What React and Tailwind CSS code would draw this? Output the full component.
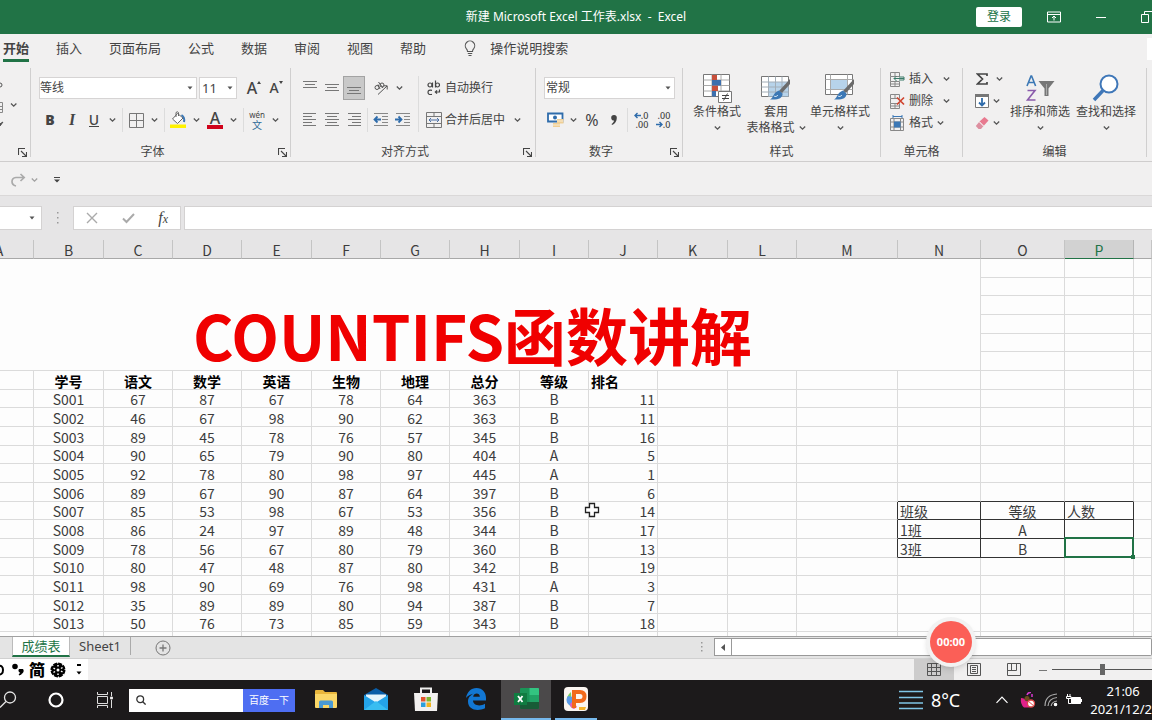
import React, { useState } from 'react';
import clsx from 'clsx';

const menus = ["插入", "页面布局", "公式", "数据", "审阅", "视图", "帮助"];

const columns = [
    { name: "A", width: "w-[69px]" },
    { name: "B", width: "w-[70px]" },
    { name: "C", width: "w-[69px]" },
    { name: "D", width: "w-[69px]" },
    { name: "E", width: "w-[70px]" },
    { name: "F", width: "w-[69px]" },
    { name: "G", width: "w-[69px]" },
    { name: "H", width: "w-[70px]" },
    { name: "I", width: "w-[69px]" },
    { name: "J", width: "w-[69px]" },
    { name: "K", width: "w-[70px]" },
    { name: "L", width: "w-[69px]" },
    { name: "M", width: "w-[101px]" },
    { name: "N", width: "w-[83px]" },
    { name: "O", width: "w-[84px]" },
    { name: "P", width: "w-[69px]" },
    { name: "", width: "" },
];

const titleRows = 6;

const rows = [
    ["学号", "语文", "数学", "英语", "生物", "地理", "总分", "等级", "排名"],
    ["S001", 67, 87, 67, 78, 64, 363, "B", 11],
    ["S002", 46, 67, 98, 90, 62, 363, "B", 11],
    ["S003", 89, 45, 78, 76, 57, 345, "B", 16],
    ["S004", 90, 65, 79, 90, 80, 404, "A", 5],
    ["S005", 92, 78, 80, 98, 97, 445, "A", 1],
    ["S006", 89, 67, 90, 87, 64, 397, "B", 6],
    ["S007", 85, 53, 98, 67, 53, 356, "B", 14],
    ["S008", 86, 24, 97, 89, 48, 344, "B", 17],
    ["S009", 78, 56, 67, 80, 79, 360, "B", 13],
    ["S010", 80, 47, 48, 87, 80, 342, "B", 19],
    ["S011", 98, 90, 69, 76, 98, 431, "A", 3],
    ["S012", 35, 89, 89, 80, 94, 387, "B", 7],
    ["S013", 50, 76, 73, 85, 59, 343, "B", 18],
    [],
];

// small summary table in N:P, keyed by row index
const summary = {
    7: ["班级", "等级", "人数"],
    8: ["1班", "A", ""],
    9: ["3班", "B", ""],
};

const rowHeight = (i) => (i % 3 === 1 ? "h-[18px]" : "h-[19px]");

/* ---------- ribbon helpers ---------- */

const Chevron = ({ className = "" }) => (
    <svg className={clsx("h-[6px] w-[7px] shrink-0", className)} viewBox="0 0 7 6" fill="none" stroke="#555" strokeWidth="1.3">
        <path d="M.8 1.5 3.5 4.2 6.2 1.5" />
    </svg>
);

const Triangle = ({ className = "" }) => (
    <svg className={clsx("h-[4px] w-[6px]", className)} viewBox="0 0 6 4" fill="#555">
        <path d="M.5 .5h5L3 3.5z" />
    </svg>
);

const Drop = ({ label }) => (
    <button type="button" aria-label={label} className="flex h-6 w-[15px] shrink-0 items-center justify-center">
        <Chevron />
    </button>
);

const IconButton = ({ label, active, children }) => (
    <button
        type="button"
        aria-label={label}
        className={clsx(
            "flex h-6 w-[22px] shrink-0 items-center justify-center",
            active && "border border-[#a3a3a3] bg-[#c9c9c9]"
        )}
    >
        {children}
    </button>
);

const Separator = () => <div className="mx-[2px] h-6 w-px shrink-0 bg-[#dcdcdc]" />;

const Launcher = () => (
    <button type="button" aria-label="对话框启动器" className="flex w-4 shrink-0 items-center justify-center">
        <svg className="h-[9px] w-[9px]" viewBox="0 0 9 9" fill="none" stroke="#444">
            <path d="M.5 7V.5H7M3 3l5 5M8.500 4v4.500H4" strokeWidth="1.100" />
        </svg>
    </button>
);

const Group = ({ title, width, pad, launcher, children }) => (
    <section aria-label={title} className={clsx("flex shrink-0 pt-[5px]", width)}>
        <div className="flex h-full min-w-0 flex-1 flex-col">
            <div className={clsx("flex", pad)}>{children}</div>
            <div className="mt-auto flex h-[18px] items-center text-xs">
                <span className="flex-1 text-center">{title}</span>
                {launcher && <Launcher />}
            </div>
        </div>
        <div className="mb-1 w-px bg-[#d0cfcf]" />
    </section>
);

const BigButton = ({ width, icon, text, text2 }) => (
    <button type="button" className={clsx("flex shrink-0 flex-col items-center text-xs leading-4 whitespace-nowrap", width)}>
        <span className="flex h-8 items-center">{icon}</span>
        <span>{text}</span>
        <span className="flex h-4 items-center gap-1">
            {text2}
            <Chevron />
        </span>
    </button>
);

const Lines = ({ d }) => (
    <svg className="h-4 w-[14px]" viewBox="0 0 14 16" stroke="#777" fill="none">
        <path d={d} />
    </svg>
);

const Indent = ({ arrow }) => (
    <svg className="h-4 w-4" viewBox="0 0 16 16" stroke="#888" fill="none">
        <path d="M1 1.500h14M9 4.500h6M9 7.500h6M9 10.500h6M1 13.500h14" />
        <path d={arrow} stroke="#2f6cab" strokeWidth="1.800" />
    </svg>
);

const Decimals = ({ top, bottom, arrowFirst }) => (
    <span className="flex flex-col text-[9px] leading-[9px] font-medium">
        <span className="flex items-center justify-end">
            {arrowFirst && (
                <svg className="h-[7px] w-[7px]" viewBox="0 0 7 7" fill="none" stroke="#2f6cab" strokeWidth="1.400">
                    <path d="M7 3.500H1M3.500 1 1 3.500 3.500 6" />
                </svg>
            )}
            {top}
        </span>
        <span className="flex items-center justify-end">
            {!arrowFirst && (
                <svg className="h-[7px] w-[7px]" viewBox="0 0 7 7" fill="none" stroke="#2f6cab" strokeWidth="1.400">
                    <path d="M0 3.500h6M3.500 1 6 3.500 3.500 6" />
                </svg>
            )}
            {bottom}
        </span>
    </span>
);

const Brush = () => (
    <>
        <path d="M29 6v5l-8 9-3-2z" fill="#6b6b6b" />
        <path d="M18 17.500l3.500 3c0 5-4 6.500-12.500 6 3.500-1.500 3-7 9-9z" fill="#3c78b5" />
        <path d="M13 23c1 1 3 .5 4-1" stroke="#cfe2f3" fill="none" />
    </>
);

const ConditionalIcon = () => (
    <svg className="h-[30px] w-[30px]" viewBox="0 0 30 30" fill="none">
        <path d="M1.500 1.500h26v22h-26z" fill="#fff" stroke="#777" />
        <path d="M10 1.500v22M19 1.500v22M1.500 7h26M1.500 12.500h26M1.500 18h26" stroke="#aaa" />
        <path d="M10 2h5v5h-5zM10 12.500h6V18h-6z" fill="#c8503c" />
        <path d="M10 7h9v5.500h-9zM10 18h4v5.500h-4z" fill="#3c6fae" />
        <path d="M16.500 18.500h13v11h-13z" fill="#fff" stroke="#777" />
        <path d="M20 22.500h7M20 25.500h7M25.500 20.500l-4 7" stroke="#444" />
    </svg>
);

const TableStyleIcon = () => (
    <svg className="h-[30px] w-[30px]" viewBox="0 0 30 30" fill="none">
        <path d="M.5 3.500h27v20H.5z" fill="#fff" stroke="#777" />
        <path d="M7.500 9h20v14.500h-20z" fill="#b7d3ea" />
        <path d="M7.500 3.500v20M14.500 3.500v20M21 3.500v20M.5 9h27M.5 14h27M.5 19h27" stroke="#a3aeb8" />
        <Brush />
    </svg>
);

const CellStyleIcon = () => (
    <svg className="h-[30px] w-[30px]" viewBox="0 0 30 30" fill="none">
        <path d="M.5 1.500h27v20H.5z" fill="#fff" stroke="#777" />
        <path d="M5.500 6.500h17v10h-17z" fill="#b7d3ea" stroke="#8b9aa6" />
        <path d="M5.500 1.500v20M22.500 1.500v20M.5 6.500h27M.5 16.500h27" stroke="#aaa" />
        <Brush />
    </svg>
);

const CellsIcon = ({ type }) => (
    <svg className="h-4 w-4" viewBox="0 0 16 16" fill="none">
        {type === "format" ? (
            <>
                <path d="M1.500 3.500h13v12h-13zM5 3.500v12M11.500 3.500v12M1.500 7h13M1.500 12h13" stroke="#888" />
                <path d="M5 6.500h6.500v6H5z" fill="#3c78b5" />
                <path d="M4 1.500h9M4 0v3M13 0v3" stroke="#3c78b5" />
            </>
        ) : (
            <>
                <path d="M1.500 1.500h9v4h-9zM6 1.500v4M1.500 10.500h9v5h-9zM6 10.500v5M1.500 13h9M1.500 5.500v5" stroke="#888" />
                {type === "insert" ? (
                    <path d="M15 7.500H5M7.500 5 5 7.500 7.500 10M10 6h5v3h-5" stroke="#3a7a68" />
                ) : (
                    <path d="M8 4.500l7 7M15 4.500l-7 7" stroke="#d0452f" strokeWidth="1.700" />
                )}
            </>
        )}
    </svg>
);

const CellsRow = ({ type, text, gap }) => (
    <button type="button" className="flex h-[22px] items-center text-xs">
        <CellsIcon type={type} />
        <span className="ml-1">{text}</span>
        <Chevron className={gap} />
    </button>
);

const Ribbon = () => {
    const [font, setFont] = useState("等线");
    const [size, setSize] = useState("11");
    const [format, setFormat] = useState("常规");

    return (
        <div className="flex h-[99px] shrink-0 overflow-hidden border-b border-[#cfcdcd] text-[#444]">
            <Group title="" width="w-[31px]" pad="flex-col pt-2" launcher>
                <svg className="h-[56px] w-[18px]" viewBox="0 0 18 56" fill="none" stroke="#555">
                    <circle cx="0" cy="9" r="2" />
                    <path d="M-2 26.500h4.500v10H-2M0 30.500h2M0 33.500h2" stroke="#888" />
                    <path d="M11 27.500l2.700 2.700 2.700-2.700" strokeWidth="1.300" />
                    <path d="M3 46 0 50l-2-1z" fill="#444" />
                </svg>
            </Group>

            <Group title="字体" width="w-[260px]" pad="flex-col gap-2 pt-2 pl-2" launcher>
                <div className="flex h-6 items-center">
                    <div className="relative mr-[2px] flex items-center">
                        <select
                            aria-label="字体"
                            value={font}
                            onChange={(e) => setFont(e.target.value)}
                            className="h-[22px] w-[158px] appearance-none border border-[#d6d4d4] bg-white text-xs leading-5"
                        >
                            <option>等线</option>
                            <option>宋体</option>
                        </select>
                        <Triangle className="pointer-events-none absolute right-1" />
                    </div>
                    <div className="relative mr-[6px] flex items-center">
                        <select
                            aria-label="字号"
                            value={size}
                            onChange={(e) => setSize(e.target.value)}
                            className="h-[22px] w-[38px] appearance-none border border-[#d6d4d4] bg-white pl-[2px] text-[13px] leading-5"
                        >
                            <option>11</option>
                            <option>12</option>
                        </select>
                        <Triangle className="pointer-events-none absolute right-1" />
                    </div>
                    <IconButton label="增大字号">
                        <span className="text-base font-medium">A</span>
                        <svg className="mb-3 h-[3px] w-1" viewBox="0 0 4 3" fill="#444"><path d="M0 3h4L2 0z" /></svg>
                    </IconButton>
                    <IconButton label="减小字号">
                        <span className="text-sm font-medium">A</span>
                        <svg className="mb-3 h-[3px] w-1" viewBox="0 0 4 3" fill="#444"><path d="M0 0h4L2 3z" /></svg>
                    </IconButton>
                </div>
                <div className="flex h-6 items-center">
                    <IconButton label="加粗"><span className="text-sm font-black">B</span></IconButton>
                    <IconButton label="倾斜"><span className="font-['Liberation_Serif'] text-base font-bold italic">I</span></IconButton>
                    <IconButton label="下划线"><span className="border-b border-[#444] text-sm leading-[13px] font-medium">U</span></IconButton>
                    <Drop label="下划线选项" />
                    <Separator />
                    <IconButton label="边框">
                        <svg className="h-[15px] w-[15px]" viewBox="0 0 15 15" fill="none" stroke="#777">
                            <path d="M.5.5h14v14H.5zM7.500.5v14M.5 7.500h14" />
                        </svg>
                    </IconButton>
                    <Drop label="边框选项" />
                    <Separator />
                    <IconButton label="填充颜色">
                        <svg className="h-[18px] w-[18px]" viewBox="0 0 18 18" fill="none">
                            <path d="M8.500 2.500 3.500 8l5 4.500L14 7z" fill="#fff" stroke="#666" />
                            <path d="M7 6V1.500q1.500-1.500 2.500 0V5" stroke="#666" />
                            <path d="M12.500 4q3.500 2 2.500 7" stroke="#3c78b5" strokeWidth="2" />
                            <path d="M1 13.500h16v3.500H1z" fill="#fff200" />
                        </svg>
                    </IconButton>
                    <Drop label="填充颜色选项" />
                    <IconButton label="字体颜色">
                        <span className="border-b-4 border-[#d0021b] px-[3px] text-base leading-[13px] font-medium">A</span>
                    </IconButton>
                    <Drop label="字体颜色选项" />
                    <Separator />
                    <IconButton label="拼音指南">
                        <span className="flex flex-col items-center text-[8px] leading-[9px]">
                            <span>wén</span>
                            <span className="text-[10px] leading-3 text-[#2f6c9b]">文</span>
                        </span>
                    </IconButton>
                    <Drop label="拼音选项" />
                </div>
            </Group>

            <Group title="对齐方式" width="w-[245px]" pad="pt-2 pl-2" launcher>
                <div className="flex flex-col gap-2">
                    <div className="flex">
                        <IconButton label="顶端对齐"><Lines d="M0 1.500h14M2 4.500h10M0 7.500h14" /></IconButton>
                        <IconButton label="垂直居中"><Lines d="M0 4.500h14M2 7.500h10M0 10.500h14" /></IconButton>
                        <IconButton label="底端对齐" active><Lines d="M0 7.500h14M2 10.500h10M0 13.500h14" /></IconButton>
                        <div className="w-[5px]" />
                        <IconButton label="方向">
                            <svg className="h-4 w-4" viewBox="0 0 16 16" fill="none" stroke="#555">
                                <circle cx="4" cy="7.500" r="2" />
                                <path d="M5 4.500 7 9M5.500 2l4.500 6" />
                                <circle cx="9" cy="5" r="2" />
                                <path d="M5 14.500 14 6M10.500 5.800 14.200 5.800 14.200 9.500" />
                            </svg>
                        </IconButton>
                        <Drop label="方向选项" />
                    </div>
                    <div className="flex">
                        <IconButton label="左对齐"><Lines d="M0 1.500h13M0 4.500h9M0 7.500h13M0 10.500h9M0 13.500h13" /></IconButton>
                        <IconButton label="居中"><Lines d="M0 1.500h14M2 4.500h10M0 7.500h14M2 10.500h10M0 13.500h14" /></IconButton>
                        <IconButton label="右对齐"><Lines d="M1 1.500h13M5 4.500h9M1 7.500h13M5 10.500h9M1 13.500h13" /></IconButton>
                        <Separator />
                        <IconButton label="减少缩进量"><Indent arrow="M8 7.500H1.500M4.500 4.500l-3 3 3 3" /></IconButton>
                        <IconButton label="增加缩进量"><Indent arrow="M0 7.500h6.500M3.500 4.500l3 3-3 3" /></IconButton>
                    </div>
                </div>
                <div className="mx-1 w-px bg-[#dcdcdc]" />
                <div className="flex flex-col gap-2 text-xs">
                    <button type="button" className="flex h-6 items-center">
                        <svg className="mx-1 h-4 w-[14px]" viewBox="0 0 14 16" fill="none" stroke="#444" strokeWidth="1.200">
                            <circle cx="3" cy="5" r="2" />
                            <path d="M5.500 2.500v5M8.500 .5v7" />
                            <circle cx="10.500" cy="5" r="2" />
                            <path d="M5 10.300q-4-.8-4 2t4 2M12.500 9.500v2.500H8.500M10 10.300l-1.700 1.700L10 13.700" />
                        </svg>
                        自动换行
                    </button>
                    <button type="button" className="flex h-6 items-center">
                        <svg className="mx-[3px] h-4 w-4" viewBox="0 0 16 16" fill="none" stroke="#777">
                            <path d="M.5.5h15v15H.5zM.5 4.500h15M.5 11.500h15M8 .5v4M8 11.500v4" />
                            <path d="M3 8h10M5 6 3 8l2 2M11 6l2 2-2 2" stroke="#4a6fa5" />
                        </svg>
                        合并后居中
                        <Chevron className="ml-[9px]" />
                    </button>
                </div>
            </Group>

            <Group title="数字" width="w-[147px]" pad="flex-col gap-2 pt-2 pl-2" launcher>
                <div className="relative flex h-6 w-[131px] items-center">
                    <select
                        aria-label="数字格式"
                        value={format}
                        onChange={(e) => setFormat(e.target.value)}
                        className="h-[22px] w-full appearance-none border border-[#d6d4d4] bg-white pl-[1px] text-xs leading-5"
                    >
                        <option>常规</option>
                        <option>货币</option>
                    </select>
                    <Triangle className="pointer-events-none absolute right-1" />
                </div>
                <div className="flex">
                    <IconButton label="会计数字格式">
                        <svg className="h-4 w-[17px]" viewBox="0 0 17 16" fill="none">
                            <path d="M1 1.500h14.500v8H1z" fill="#fff" stroke="#2f6cab" strokeWidth="1.800" />
                            <circle cx="8" cy="5.500" r="2" fill="#2f6cab" />
                            <path d="M6 11h7v4H6zM10 7h6.500v4.500H10z" fill="#f0cf95" />
                            <path d="M6 13h7M10 9h6.500" stroke="#fff" strokeWidth=".6" />
                        </svg>
                    </IconButton>
                    <Drop label="会计格式选项" />
                    <IconButton label="百分比样式"><span className="text-base">%</span></IconButton>
                    <IconButton label="千位分隔样式">
                        <svg className="h-[10px] w-[6px]" viewBox="0 0 6 10" fill="#444">
                            <path d="M3 0a2.700 2.700 0 0 1 2.800 3C5.800 6 4 9 1 10L.6 9C2 8 3 7 3 5.600A2.800 2.800 0 0 1 3 0z" />
                        </svg>
                    </IconButton>
                    <Separator />
                    <IconButton label="增加小数位数"><Decimals arrowFirst top=".0" bottom=".00" /></IconButton>
                    <IconButton label="减少小数位数"><Decimals top=".00" bottom=".0" /></IconButton>
                </div>
            </Group>

            <Group title="样式" width="w-[198px]" pad="pt-1 pl-[5px]">
                <BigButton width="w-[58px]" icon={<ConditionalIcon />} text="条件格式" />
                <BigButton width="w-[60px]" icon={<TableStyleIcon />} text="套用" text2="表格格式" />
                <BigButton width="w-[68px]" icon={<CellStyleIcon />} text="单元格样式" />
            </Group>

            <Group title="单元格" width="w-[82px]" pad="flex-col items-start pl-2">
                <CellsRow type="insert" text="插入" gap="ml-[10px]" />
                <CellsRow type="delete" text="删除" gap="ml-[10px]" />
                <CellsRow type="format" text="格式" gap="ml-1" />
            </Group>

            <Group title="编辑" width="w-[184px]" pad="pl-[9px]">
                <div className="flex flex-col">
                    <button type="button" aria-label="自动求和" className="flex h-[22px] w-[35px] items-center">
                        <svg className="mx-1 h-3 w-3" viewBox="0 0 12 12" fill="none" stroke="#444" strokeWidth="1.700">
                            <path d="M11 3V1H1.500L6.500 6l-5 5H11V9" />
                        </svg>
                        <Chevron className="ml-1" />
                    </button>
                    <button type="button" aria-label="填充" className="flex h-[22px] w-[35px] items-center">
                        <svg className="mx-[3px] h-[14px] w-[14px]" viewBox="0 0 14 14" fill="none">
                            <path d="M.5.5h13v13H.5z" fill="#fff" stroke="#777" />
                            <path d="M0 0h14v3H0z" fill="#777" />
                            <path d="M7 4v7M4 8.500l3 3 3-3" stroke="#2f6cab" strokeWidth="1.800" />
                        </svg>
                        <Chevron className="ml-px" />
                    </button>
                    <button type="button" aria-label="清除" className="flex h-[22px] w-[35px] items-center">
                        <svg className="mx-[3px] h-[14px] w-[14px]" viewBox="0 0 14 14">
                            <path d="M9.500 1 13.500 4.500 9 9.500 4.500 5.500z" fill="#e8798f" />
                            <path d="M4.500 5.500 9 9.500 6 13H3.500L.8 10z" fill="#dd8fa0" />
                            <path d="M4 5.500 8.500 10" stroke="#fff" />
                        </svg>
                        <Chevron className="ml-px" />
                    </button>
                </div>
                <div className="flex pt-1">
                    <BigButton
                        width="w-[66px]"
                        text="排序和筛选"
                        icon={
                            <svg className="h-[28px] w-[30px]" viewBox="0 0 30 28" fill="none">
                                <path d="M2 12 6 2h.6l4 10M3.500 8.500h6" stroke="#3c78b5" strokeWidth="1.600" />
                                <path d="M2.500 16.500H10L2.500 26H10.500" stroke="#8a5bab" strokeWidth="1.600" />
                                <path d="M13.500 7h16l-6 7.500V22h-4v-7.500z" fill="#777" />
                                <path d="M21.500 10v11" stroke="#aaa" />
                            </svg>
                        }
                    />
                    <BigButton
                        width="w-[66px]"
                        text="查找和选择"
                        icon={
                            <svg className="h-[28px] w-[28px]" viewBox="0 0 28 28" fill="none" stroke="#3f77b8">
                                <circle cx="17" cy="10" r="8.500" strokeWidth="2" fill="#fff" />
                                <path d="M11 16.500 2 26" strokeWidth="3.500" />
                            </svg>
                        }
                    />
                </div>
            </Group>
        </div>
    );
};

const Sheet = () => {
    const cellClass = (row, col) => {
        const inBox = row in summary;
        const aboveBox = row + 1 in summary;
        const boxCol = col >= 13 && col <= 15;
        return clsx(
            "border-r border-b px-[2px] pt-px pb-0",
            (inBox && col >= 12 && col <= 15) ? "border-r-[#333]" : "border-r-[#dbdbdb]",
            ((inBox || aboveBox) && boxCol) ? "border-b-[#333]" : "border-b-[#dbdbdb]",
            row === 0 && "font-bold text-black",
            (col === 9 && row > 0) ? "text-right" : ((col === 9 || col === 13 || col === 15) ? "text-left" : "text-center")
        );
    };

    const cellValue = (row, col) => {
        if (col >= 1 && col <= 9) return rows[row][col - 1];
        if (col >= 13 && col <= 15 && summary[row]) return summary[row][col - 13];
        return null;
    };

    return (
        <main className="relative min-h-0 flex-1 overflow-hidden bg-[#fdfdfd]">
            <table className="-ml-[35px] w-[calc(100%+35px)] table-fixed border-separate border-spacing-0 font-['Noto_Sans_CJK_SC',sans-serif] text-sm leading-4 text-[#3c3c3c]">
                <colgroup>
                    {columns.map((c) => <col key={c.name} className={c.width} />)}
                </colgroup>
                <thead>
                    <tr className="h-[19px] bg-[#e6e5e6]">
                        {columns.map((c) => (
                            <th
                                key={c.name}
                                scope="col"
                                className={clsx(
                                    "border-r border-b px-0 pt-[2px] pb-0 font-normal",
                                    c.name === "P"
                                        ? "border-r-[#b5b5b5] border-b-[#217346] bg-[#d2d2d2] text-[#217346]"
                                        : "border-r-[#c4c4c4] border-b-[#a8a8a8]"
                                )}
                            >
                                {c.name}
                            </th>
                        ))}
                    </tr>
                </thead>
                <tbody>
                    {Array.from({ length: titleRows }, (_, i) => (
                        <tr key={i} className={rowHeight(i)}>
                            {i === 0 && (
                                <td colSpan={14} rowSpan={titleRows} className="border-r border-b border-[#dbdbdb] p-0 align-bottom">
                                    <h1 className="text-center text-[62px] leading-[72px] font-bold text-[#f00000]">COUNTIFS函数讲解</h1>
                                </td>
                            )}
                            <td className="border-r border-b border-[#dbdbdb] p-0" />
                            <td className="border-r border-b border-[#dbdbdb] p-0" />
                            <td className="border-r border-b border-[#dbdbdb] p-0" />
                        </tr>
                    ))}
                    {rows.map((_, row) => (
                        <tr key={row} className={rowHeight(row)}>
                            {columns.map((c, col) =>
                                row === 9 && c.name === "P" ? (
                                    <td key={c.name} className="relative border-r border-b border-[#333] p-0">
                                        <div className="absolute -inset-px -top-[2px] border-2 border-[#217346]" />
                                        <div className="absolute -right-[2px] -bottom-[2px] h-1 w-1 bg-[#217346]" />
                                    </td>
                                ) : (
                                    <td key={c.name} className={cellClass(row, col)}>{cellValue(row, col)}</td>
                                )
                            )}
                        </tr>
                    ))}
                </tbody>
            </table>

            {/* mouse pointer */}
            <svg className="absolute top-[262px] left-[584px] h-4 w-4" viewBox="0 0 16 16">
                <path d="M5.500 1.500h5v4h4v5h-4v4h-5v-4h-4v-5h4z" fill="#fff" stroke="#222" strokeWidth="1.300" />
            </svg>
        </main>
    );
};

const TaskIcon = ({ label, active, children }) => (
    <button
        type="button"
        aria-label={label}
        className={clsx(
            "flex h-10 w-[50px] shrink-0 items-center justify-center border-b-2",
            active ? "border-[#76b9ed] bg-[#4b494a]" : "border-transparent"
        )}
    >
        {children}
    </button>
);

const Taskbar = () => (
    <footer className="flex h-10 shrink-0 items-center overflow-hidden bg-[#1c1a1b] text-white">
        <button type="button" aria-label="搜索" className="w-[31px] shrink-0">
            <svg className="h-5 w-[17px]" viewBox="0 0 17 20" fill="none" stroke="#e5e5e5" strokeWidth="1.300">
                <circle cx="10" cy="7.500" r="5.500" />
                <path d="M6 11.500 0 17.500" />
            </svg>
        </button>
        <button type="button" aria-label="Cortana" className="flex w-[50px] shrink-0 justify-center">
            <svg className="h-4 w-4" viewBox="0 0 16 16" fill="none" stroke="#fff" strokeWidth="2.200">
                <circle cx="8" cy="8" r="6.500" />
            </svg>
        </button>
        <button type="button" aria-label="任务视图" className="flex w-[48px] shrink-0 justify-center">
            <svg className="h-4 w-[18px]" viewBox="0 0 18 16" fill="none" stroke="#ddd">
                <path d="M1.500 4.500h10v7h-10zM1.500 0v2.500h10V0M1.500 16v-2.500h10V16M15.500 0v4M15.500 8v8" />
                <path d="M14.500 5h2v2h-2z" fill="#fff" />
            </svg>
        </button>
        <form className="mr-[6px] flex h-[23px] shrink-0" onSubmit={(e) => e.preventDefault()}>
            <label className="flex w-[114px] items-center bg-white pl-[7px]">
                <svg className="h-[10px] w-[10px] shrink-0" viewBox="0 0 10 10" fill="none" stroke="#333" strokeWidth="1.300">
                    <circle cx="4.200" cy="4.200" r="3.400" />
                    <path d="M6.800 6.800 9.600 9.600" />
                </svg>
                <input type="text" aria-label="百度搜索" className="w-full min-w-0 pl-2 text-xs text-black outline-none" />
            </label>
            <button type="submit" className="w-[52px] bg-[#4e6ef2] text-[10px] whitespace-nowrap">百度一下</button>
        </form>

        <TaskIcon label="文件资源管理器">
            <svg className="h-[18px] w-[22px]" viewBox="0 0 22 18">
                <path d="M0 1q0-1 1-1h7l2 2h11q1 0 1 1v14H0z" fill="#e9b63c" />
                <path d="M0 4h22v13q0 1-1 1H1q-1 0-1-1z" fill="#fbd768" />
                <path d="M4 18v-6q0-1.500 1.500-1.500h11Q18 10.500 18 12v6h-4v-3H8v3z" fill="#4a9ad4" />
            </svg>
        </TaskIcon>
        <TaskIcon label="邮件">
            <svg className="h-[22px] w-6" viewBox="0 0 24 22">
                <path d="M0 7 12 0l12 7v8H0z" fill="#0a5ea8" />
                <path d="M2 6.500h20V12l-10 4L2 12z" fill="#e6f5fc" />
                <path d="M0 7l12 7.500L24 7v15H0z" fill="#24a3e8" />
                <path d="M0 22 12 13l12 9z" fill="#38bdf1" />
            </svg>
        </TaskIcon>
        <TaskIcon label="应用商店">
            <svg className="h-6 w-6" viewBox="0 0 24 24">
                <path d="M7 7V1.500h10V7" fill="none" stroke="#eee" strokeWidth="2" />
                <path d="M0 6h24l-1 18H1z" fill="#f2f0ef" />
                <path d="M7 10h4.500v4.500H7z" fill="#e2552f" />
                <path d="M12.500 10H17v4.500h-4.500z" fill="#7db72f" />
                <path d="M7 15.500h4.500V20H7z" fill="#2d9fdc" />
                <path d="M12.500 15.500H17V20h-4.500z" fill="#f2b41e" />
            </svg>
        </TaskIcon>
        <TaskIcon label="Edge">
            <svg className="h-[22px] w-[20px]" viewBox="0 0 20 22">
                <path d="M0 10C1 4 5 0 10.500 0 16.500 0 20 4.500 20 10v2.500H7c.3 5.500 7.500 6 12 3.300v4.500C11 24 2 21.500 2 13.500 2 9.500 4.500 7 8 5.500 4.500 6 1.500 8 0 10zM7.200 8.800h6.600C14 4.500 7.600 4.500 7.200 8.800z" fill="#1277d3" />
            </svg>
        </TaskIcon>
        <TaskIcon label="Excel" active>
            <svg className="h-[22px] w-[25px]" viewBox="0 0 25 22">
                <path d="M6 1q0-1 1-1h17q1 0 1 1v19q0 1-1 1H7q-1 0-1-1z" fill="#1a9457" />
                <path d="M15.500 0H24q1 0 1 1v6h-9.500z" fill="#33c481" />
                <path d="M15.500 7H25v7h-9.500z" fill="#21a366" />
                <path d="M6 14h19v6q0 1-1 1H7q-1 0-1-1z" fill="#185c37" />
                <path d="M0 5h13v12H0z" fill="#107c41" />
                <path d="M4 8l4.500 6M8.500 8 4 14" stroke="#fff" strokeWidth="1.800" />
            </svg>
        </TaskIcon>
        <div className="px-1">
            <button type="button" aria-label="录屏" className="flex h-10 w-[42px] items-center justify-center border-b-2 border-[#76b9ed]">
                <svg className="h-6 w-6" viewBox="0 0 24 24">
                    <rect width="24" height="24" rx="4" fill="#faf6f1" />
                    <path d="M7 5Q2 9 3 15l5 6z" fill="#7ccf5f" />
                    <path d="M4 9q-3 4 0 8l5 4V10z" fill="#5b9be8" />
                    <path d="M6 17q0 4 4 5l3-2-4-6z" fill="#e85fb0" />
                    <path d="M10 21V5h6q4.500 0 4.500 4.500T16 14h-5" fill="none" stroke="#f26a1b" strokeWidth="4" />
                    <path d="M15 20h7l-1 3h-6z" fill="#f7b52c" />
                </svg>
            </button>
        </div>

        <div className="ml-auto flex shrink-0 items-center font-['Noto_Sans']">
            <svg className="h-5 w-6" viewBox="0 0 24 20" stroke="#7fc6e8" strokeWidth="1.500">
                <path d="M0 1.500h24M0 7.500h24M0 13h24M0 18.500h24" />
            </svg>
            <span className="mr-[36px] ml-2 text-lg">8°C</span>
            <button type="button" aria-label="显示隐藏的图标" className="w-6">
                <svg className="h-2 w-3" viewBox="0 0 12 8" fill="none" stroke="#fff" strokeWidth="1.200"><path d="M.5 6.800 6 1.200l5.500 5.600" /></svg>
            </button>
            <svg className="mr-2 h-4 w-4" viewBox="0 0 16 16">
                <path d="M1 6q4 0 5 3l6 1q1 4-3 5.500H4Q0 12 1 6z" fill="#e0218a" />
                <circle cx="7" cy="6.500" r="2.500" fill="#6b4a1e" />
                <path d="M7 3q1-3 4-2.500M12 2v3" stroke="#d63ad0" strokeWidth="1.500" fill="none" />
                <circle cx="11" cy="11.500" r="3.500" fill="#fff" stroke="#d44" strokeWidth="1.300" />
                <path d="M8.700 9.500l4.600 4" stroke="#d44" />
            </svg>
            <svg className="mr-2 h-[14px] w-[14px]" viewBox="0 0 14 14" fill="none" stroke="#aaa" strokeWidth="1.200">
                <path d="M1 13Q1 2 13 1M4 13Q4.500 5.500 13 4.500M7.200 13Q7.500 9 13 8" />
                <circle cx="11.500" cy="11.500" r="1.200" fill="#fff" stroke="#fff" />
            </svg>
            <svg className="mr-2 h-3 w-4" viewBox="0 0 16 12" fill="none" stroke="#fff">
                <path d="M5.500 3.500h9v6h-9z" fill="#fff" />
                <path d="M15.500 5v3M1.500 0v2.500M4 0v2.500M.5 2.500h4.500v2H.5zM2.500 5v4.500h3" />
            </svg>
            <time className="text-[13px] leading-[18px]">
                <span className="block pl-1 text-center">21:06</span>
                <span className="block">2021/12/2</span>
            </time>
        </div>
    </footer>
);

const App = () => {
    const [formula, setFormula] = useState("");
    const [zoom, setZoom] = useState(50);

    return (
        <div className="flex h-screen w-full flex-col overflow-hidden bg-[#f1f0f0] font-['Noto_Sans','Noto_Sans_CJK_SC',sans-serif] text-[#444]">
            <header className="relative flex h-[34px] shrink-0 items-center justify-end bg-[#217346] text-white">
                <p className="absolute inset-x-0 text-center text-xs whitespace-pre">新建 Microsoft Excel 工作表.xlsx  -  Excel</p>
                <button type="button" className="relative mr-[25px] h-5 w-[46px] rounded-xs bg-white text-xs text-[#217346]">登录</button>
                <button type="button" aria-label="功能区显示选项" className="relative mr-[34px]">
                    <svg className="h-3 w-[14px]" viewBox="0 0 14 12" fill="none" stroke="#fff">
                        <path d="M.5 1h13v10H.5zM.5 3.500h13M7 9.500V5M5 7l2-2 2 2" />
                    </svg>
                </button>
                <button type="button" aria-label="最小化" className="relative mr-[34px]">
                    <svg className="h-3 w-3" viewBox="0 0 12 12" stroke="#fff"><path d="M1 6.500h10" /></svg>
                </button>
                <button type="button" aria-label="还原" className="relative w-[11px] overflow-hidden">
                    <svg className="h-3 w-3" viewBox="0 0 12 12" fill="none" stroke="#fff"><path d="M.5 3.500h7v8h-7zM3.500 3V.5H12" /></svg>
                </button>
            </header>

            <nav className="flex h-[29px] shrink-0 items-center gap-[27px] pl-[3px] text-[13px] whitespace-nowrap">
                <button type="button" className="mt-[2px] h-[25px] border-b-[3px] border-[#217346] leading-[20px] font-bold">开始</button>
                {menus.map((m) => <button type="button" key={m}>{m}</button>)}
                <button type="button" className="ml-[10px] flex items-center gap-[13px]">
                    <svg className="h-[17px] w-[14px]" viewBox="0 0 14 17" fill="none" stroke="#555" strokeWidth="1.100">
                        <path d="M4.500 11.500Q4.500 10 3.300 8.600A4.700 4.700 0 1 1 10.700 8.600Q9.500 10 9.500 11.500zM4.800 13.500h4.400M5.500 15.500h3" />
                    </svg>
                    操作说明搜索
                </button>
                <div className="ml-auto h-[22px] w-[5px] bg-white" />
            </nav>

            <Ribbon />

            <div className="flex h-[34px] shrink-0 items-center border-b border-[#dad8d8] pt-[2px] pl-[11px]">
                <button type="button" aria-label="恢复" className="flex items-center">
                    <svg className="h-[14px] w-[15px]" viewBox="0 0 15 14" fill="none" stroke="#aaa" strokeWidth="1.700">
                        <path d="M13 4.500H5Q1 5 1 8.500 1 12 5 13M9.500 1 13.200 4.500 9.500 8" />
                    </svg>
                    <Chevron className="ml-[5px] opacity-50" />
                </button>
                <button type="button" aria-label="自定义快速访问工具栏" className="ml-4">
                    <svg className="h-[6px] w-[6px]" viewBox="0 0 6 6" fill="#444"><path d="M0 0h6v1H0zM0 2.500h6L3 5.500z" /></svg>
                </button>
            </div>

            <div className="flex h-11 shrink-0 items-center bg-[#e6e5e6]">
                <button type="button" aria-label="名称框" className="flex h-6 w-[42px] shrink-0 items-center justify-end border border-l-0 border-[#d4d2d2] bg-white pr-[6px]">
                    <Triangle />
                </button>
                <svg className="mx-[13px] h-3 w-[5px] shrink-0" viewBox="0 0 5 12" fill="#999">
                    <path d="M2 0h1.500v1.500H2zM2 5h1.500v1.500H2zM2 10h1.500v1.500H2z" />
                </svg>
                <div className="flex h-6 w-[108px] shrink-0 items-center justify-around border border-[#d4d2d2] bg-white">
                    <button type="button" aria-label="取消">
                        <svg className="h-3 w-3" viewBox="0 0 12 12" stroke="#aaa" strokeWidth="1.400"><path d="M1 1l10 10M11 1 1 11" /></svg>
                    </button>
                    <button type="button" aria-label="输入">
                        <svg className="h-3 w-[13px]" viewBox="0 0 13 12" fill="none" stroke="#aaa" strokeWidth="2"><path d="M1 6.500 4.500 10 12 2" /></svg>
                    </button>
                    <button type="button" className="font-['Liberation_Serif'] text-base leading-5 italic">f<span className="text-xs">x</span></button>
                </div>
                <input
                    type="text"
                    aria-label="编辑栏"
                    value={formula}
                    onChange={(e) => setFormula(e.target.value)}
                    className="ml-[3px] h-6 min-w-0 flex-1 border border-r-0 border-[#d4d2d2] bg-white px-1 text-sm outline-none"
                />
            </div>

            <Sheet />

            <div className="flex h-[23px] shrink-0 border-y border-t-[#a0a0a0] border-b-[#d0d0d0] bg-[#e4e4e4]">
                <button type="button" className="ml-3 h-5 w-[58px] border-x border-b-2 border-x-[#bbb] border-b-[#217346] bg-white text-[13px] leading-4 text-[#217346]">成绩表</button>
                <button type="button" className="h-[18px] w-[61px] border-r border-[#aaa] text-[13px] leading-4">Sheet1</button>
                <button type="button" aria-label="新工作表" className="ml-6">
                    <svg className="h-4 w-4" viewBox="0 0 16 16" fill="none" stroke="#777">
                        <circle cx="8" cy="8" r="7" />
                        <path d="M8 4.500v7M4.500 8h7" strokeWidth="1.300" />
                    </svg>
                </button>
                <svg className="mt-1 mr-[10px] ml-auto h-3 w-[5px]" viewBox="0 0 5 12" fill="#999">
                    <path d="M2 1h1.500v1.500H2zM2 5h1.500v1.500H2zM2 9h1.500v1.500H2z" />
                </svg>
                <div className="mt-px flex h-[18px] w-[438px]">
                    <button type="button" aria-label="向左滚动" className="flex w-[18px] items-center justify-center border border-[#999] bg-white">
                        <svg className="h-[7px] w-1" viewBox="0 0 4 7" fill="#555"><path d="M4 0v7L0 3.500z" /></svg>
                    </button>
                    <div className="flex-1 rounded-r-xs border border-l-0 border-[#999] bg-white" />
                </div>
            </div>

            <div className="relative flex h-[21px] shrink-0 items-center">
                <div className="flex h-full w-[88px] items-center bg-white text-black">
                    <svg className="h-4 w-[26px]" viewBox="0 0 26 16" fill="none" stroke="#000" strokeWidth="2">
                        <path d="M-2 4Q3 3 3 8t-5 4.500" />
                        <circle cx="15" cy="4.500" r="1.800" fill="#000" />
                        <path d="M19 7.500h4q1 4-4 5.500 2-2 1-3.500h-1z" fill="#000" strokeWidth="1" />
                    </svg>
                    <span className="ml-[3px] text-base leading-5 font-black">简</span>
                    <svg className="ml-[5px] h-4 w-4" viewBox="0 0 16 16">
                        <circle cx="8" cy="8" r="6.500" stroke="#000" strokeWidth="2" strokeDasharray="4 1" />
                        <circle cx="8" cy="8" r="1.500" fill="#fff" />
                        <path d="M8 3v1.500M8 11.500V13M3.500 6l1.500 1M11 9l1.500 1M12.500 5.500 11 6.500M5 9.500l-1.500 1" stroke="#fff" strokeWidth="1.500" />
                    </svg>
                    <svg className="ml-[10px] h-[11px] w-[6px]" viewBox="0 0 6 11"><path d="M1 0h4v2H1zM.5 7.500h5L3 10.500z" /></svg>
                </div>
                <button type="button" aria-label="普通视图" className="ml-auto flex h-full w-10 items-center justify-center bg-[#cdcccc]">
                    <svg className="h-[13px] w-[14px]" viewBox="0 0 14 13" fill="none" stroke="#555">
                        <path d="M.5.5h13v12H.5zM4.500.5v12M9.500.5v12M.5 4.500h13M.5 8.500h13" />
                    </svg>
                </button>
                <button type="button" aria-label="页面布局视图" className="flex w-10 justify-center">
                    <svg className="h-[13px] w-[14px]" viewBox="0 0 14 13" fill="none" stroke="#555">
                        <path d="M.5.5h13v12H.5zM3.500 2.500h7v8h-7zM5 4.500h4M5 6.500h4M5 8.500h4" />
                    </svg>
                </button>
                <button type="button" aria-label="分页预览" className="flex w-10 justify-center">
                    <svg className="h-[13px] w-[14px]" viewBox="0 0 14 13" fill="none" stroke="#555">
                        <path d="M.5.5h13v12H.5zM4.500.5v7M9.500.5v7M.5 7.500h9" />
                    </svg>
                </button>
                <button type="button" aria-label="缩小" className="mx-[5px]">
                    <svg className="h-2 w-2" viewBox="0 0 8 8" stroke="#777"><path d="M0 4.500h8" /></svg>
                </button>
                <input
                    type="range"
                    aria-label="显示比例"
                    min="0"
                    max="100"
                    value={zoom}
                    onChange={(e) => setZoom(e.target.value)}
                    className="h-px w-[100px] appearance-none bg-[#555] [&::-webkit-slider-thumb]:h-[11px] [&::-webkit-slider-thumb]:w-[5px] [&::-webkit-slider-thumb]:appearance-none [&::-webkit-slider-thumb]:bg-[#666]"
                />

                {/* screen recorder timer */}
                <div className="absolute right-[176px] bottom-[13px] flex size-[50px] items-center justify-center rounded-full bg-[#f2f2f2] shadow-md">
                    <div className="flex size-[42px] items-center justify-center rounded-full bg-[#fb5f57] font-['Open_Sans'] text-[11px] font-bold text-white">00:00</div>
                </div>
            </div>

            <Taskbar />
        </div>
    );
};

export default App;
